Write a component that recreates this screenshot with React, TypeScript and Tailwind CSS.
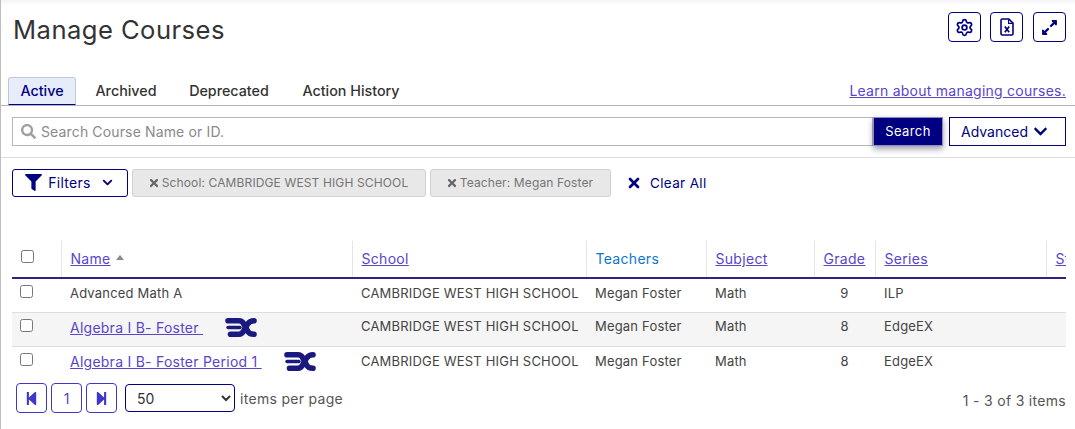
import { Settings, ChevronDown, X } from "lucide-react";
import { FaFilter, FaStepBackward, FaStepForward, FaChevronDown, FaTimes, FaSearch, FaExpandAlt } from "react-icons/fa";

const rows = [
  { name: "Advanced Math A", grade: "9", series: "ILP", link: false },
  { name: "Algebra I B- Foster ", grade: "8", series: "EdgeEX", link: true },
  { name: "Algebra I B- Foster Period 1 ", grade: "8", series: "EdgeEX", link: true },
];

const EdgeLogo = () => (
  <svg viewBox="0 0 32 19" className="ml-[22px] h-[19px] w-[32px]" fill="none" stroke="#1a1a7e" strokeLinecap="round">
    <path d="M3 2.8H14C16.5 2.8 17.6 4 18.6 5.6L22.5 12.8C23.8 15.2 25 16.2 29 16.2" strokeWidth="5.6" />
    <path d="M29 2.8C25.6 2.8 24 3.8 22.5 6.2L18.6 13C17.6 15 16.5 16.2 14 16.2H5.5" strokeWidth="5.6" />
    <path d="M3 9.5H15" strokeWidth="3.4" />
  </svg>
);

const HeaderButton = ({ children, className = "" }: { children: React.ReactNode; className?: string }) => (
  <button className={`grid h-[30px] w-[33px] place-content-center rounded-[4px] border border-[#000080] text-[#000080] ${className}`}>
    {children}
  </button>
);

const PageButton = ({ children }: { children: React.ReactNode }) => (
  <button className="grid h-[30px] w-[31px] place-content-center rounded-[4px] border border-[#3f37c9] text-[#3f37c9]">
    {children}
  </button>
);

const Chip = ({ label, width }: { label: string; width: string }) => (
  <div className={`flex h-[28px] items-center justify-center gap-[2px] rounded-[3px] border border-[#d0d0d0] bg-[#e8e8e8] pb-[1px] pr-[2px] text-[12px] tracking-[0.13px] text-[#757575] ${width}`}>
    <FaTimes className="text-[12px] text-[#666666]" />
    {label}
  </div>
);

export default function App() {
  return (
    <div className="h-[429px] w-[1075px] overflow-hidden border-l border-[#bdbdbd] bg-white font-['Inter',sans-serif] text-[#444444]">
      <div className="h-[5px] bg-gradient-to-b from-[#f3f3f9] to-white" />
      <div className="flex h-[42px] items-start justify-between pl-[12px] pr-[9px] pt-[12px]">
        <h1 className="text-[25.6px] leading-[26px] tracking-[0.45px] text-[#333333]">Manage Courses</h1>
        <div className="-mt-[5px] flex gap-[9px]">
          <HeaderButton>
            <Settings size={19} strokeWidth={2.2} />
          </HeaderButton>
          <HeaderButton>
            <svg viewBox="0 0 14 18" className="h-[18px] w-[14px]" fill="none" stroke="#000080" strokeWidth="1.6">
              <path d="M1 2.2C1 1.4 1.5 1 2.2 1H8.8L13 5.2V15.8C13 16.5 12.5 17 11.8 17H2.2C1.5 17 1 16.5 1 15.8Z" />
              <path d="M8.6 1.2V5.4H12.8" strokeWidth="1.1" />
              <path d="M4.8 8.4L9.2 14.2M9.2 8.4L4.8 14.2" strokeWidth="1.7" />
            </svg>
          </HeaderButton>
          <HeaderButton className="ml-[1px]">
            <FaExpandAlt className="text-[17px]" />
          </HeaderButton>
        </div>
      </div>

      <div className="mt-[30px] flex h-[29px] items-stretch justify-between border-b border-[#b5b5b5] pr-[9px]">
        <div className="flex text-[14.3px] font-medium">
          <div className="ml-[7px] flex w-[68px] items-center justify-center rounded-t-[3px] border border-[#c3c8d6] border-b-[#000080] bg-[#e7ecfb] text-[#000080]">Active</div>
          <div className="ml-[3px] flex w-[94px] items-center justify-center text-[#333333]">Archived</div>
          <div className="flex w-[112px] items-center justify-center text-[#333333]">Deprecated</div>
          <div className="flex w-[132px] items-center justify-center text-[#333333]">Action History</div>
        </div>
        <a href="#" className="self-center pb-[2px] text-[14px] tracking-[0.25px] text-[#5a45c9] underline">Learn about managing courses.</a>
      </div>

      <div className="flex h-[52px] items-start border-b border-[#dddddd] pl-[11px] pr-[9px] pt-[11px]">
        <div className="flex h-[29px] w-[861px] items-center gap-[5px] border border-[#b5b5b5] pl-[8px] text-[14px] tracking-[0.14px] text-[#8a8a8a]">
          <FaSearch className="text-[15px] text-[#a0a0a0]" />
          Search Course Name or ID.
        </div>
        <button className="h-[29px] w-[70px] border border-[#8d8db5] bg-[#000080] text-[13px] tracking-[0.4px] text-white shadow-[0_3px_6px_rgba(0,0,60,0.4)]">Search</button>
        <button className="ml-[6px] flex h-[29px] w-[117px] items-center justify-center gap-[5px] border border-[#000080] pr-[6px] text-[14px] text-[#000080]">
          Advanced <FaChevronDown className="text-[15px]" />
        </button>
      </div>

      <div className="flex items-center pl-[11px] pt-[11px]">
        <button className="flex h-[28px] w-[116px] items-center justify-center gap-[6px] rounded-[3px] border border-[#000080] pb-[1px] text-[14px] tracking-[0.3px] text-[#000080]">
          <FaFilter className="text-[17px]" />
          Filters
          <ChevronDown size={15} strokeWidth={3} className="ml-[3px]" />
        </button>
        <div className="ml-[4px] flex gap-[4px]">
          <Chip label="School: CAMBRIDGE WEST HIGH SCHOOL" width="w-[294px]" />
          <Chip label="Teacher: Megan Foster" width="w-[181px]" />
        </div>
        <button className="ml-[15px] flex items-center gap-[8px] text-[13.5px] tracking-[0.35px] text-[#000080]">
          <X size={16} strokeWidth={4} />
          Clear All
        </button>
      </div>

      <div className="ml-[11px] mt-[44px] w-[1054px] overflow-hidden">
        <table className="w-[1150px] table-fixed border-collapse text-[13px] tracking-[0.19px]">
          <colgroup>
            <col className="w-[49px]" />
            <col className="w-[291px]" />
            <col className="w-[234px]" />
            <col className="w-[120px]" />
            <col className="w-[108px]" />
            <col className="w-[61px]" />
            <col className="w-[171px]" />
            <col className="w-[116px]" />
          </colgroup>
          <thead>
            <tr className="h-[37px] border-b-2 border-[#2e2383] text-left">
              <th className="pb-[6px] pl-[9px]">
                <input type="checkbox" className="block h-[13px] w-[13px]" />
              </th>
              {["Name", "School", "Teachers", "Subject", "Grade", "Series", "Status"].map((h) => (
                <th key={h} className="border-l border-[#e5e5e5] pb-[1px] pl-[9px] text-[14px] font-normal tracking-[0.3px]">
                  <span className={h === "Teachers" ? "text-[#0b76d1]" : "text-[#5a45c9] underline"}>{h}</span>
                  {h === "Name" && <span className="ml-[5px] inline-block border-x-[4px] border-b-[5px] border-x-transparent border-b-[#8a8a8a] align-[4px]" />}
                </th>
              ))}
            </tr>
          </thead>
          <tbody>
            {rows.map((r, i) => (
              <tr key={r.name} className={`h-[34px] ${i < 2 ? "border-b border-[#dedede]" : ""} ${i === 1 ? "bg-[#f5f5f5]" : ""}`}>
                <td className="pb-[8px] pl-[8px]">
                  <input type="checkbox" className="block h-[13px] w-[13px]" />
                </td>
                <td className="pb-[4px] pl-[9px]">
                  {r.link ? (
                    <span className="flex items-center">
                      <a href="#" className="whitespace-pre text-[14px] tracking-[0.25px] text-[#5a45c9] underline">{r.name}</a>
                      <EdgeLogo />
                    </span>
                  ) : (
                    r.name
                  )}
                </td>
                <td className="whitespace-nowrap pb-[4px] pl-[9px]">CAMBRIDGE WEST HIGH SCHOOL</td>
                <td className="pb-[4px] pl-[9px]">Megan Foster</td>
                <td className="pb-[4px] pl-[9px]">Math</td>
                <td className="pb-[4px] text-center">{r.grade}</td>
                <td className="pb-[4px] pl-[9px]">{r.series}</td>
                <td />
              </tr>
            ))}
          </tbody>
        </table>
      </div>

      <div className="flex items-center justify-between pl-[15px] pr-[9px] pt-[3px]">
        <div className="flex items-center gap-[4px]">
          <PageButton><FaStepBackward className="text-[15px]" /></PageButton>
          <PageButton><span className="text-[14px] text-[#5a45c9]">1</span></PageButton>
          <PageButton><FaStepForward className="text-[15px]" /></PageButton>
          <select defaultValue="50" className="ml-[4px] h-[28px] w-[110px] rounded-[4px] border border-[#000080] bg-white pl-[7px] text-[14px] text-[#333333]">
            <option>50</option>
          </select>
          <span className="ml-[1px] text-[14px] tracking-[0.3px] text-[#555555]">items per page</span>
        </div>
        <span className="pt-[5px] text-[14px] tracking-[0.3px] text-[#555555]">1 - 3 of 3 items</span>
      </div>
    </div>
  );
}
